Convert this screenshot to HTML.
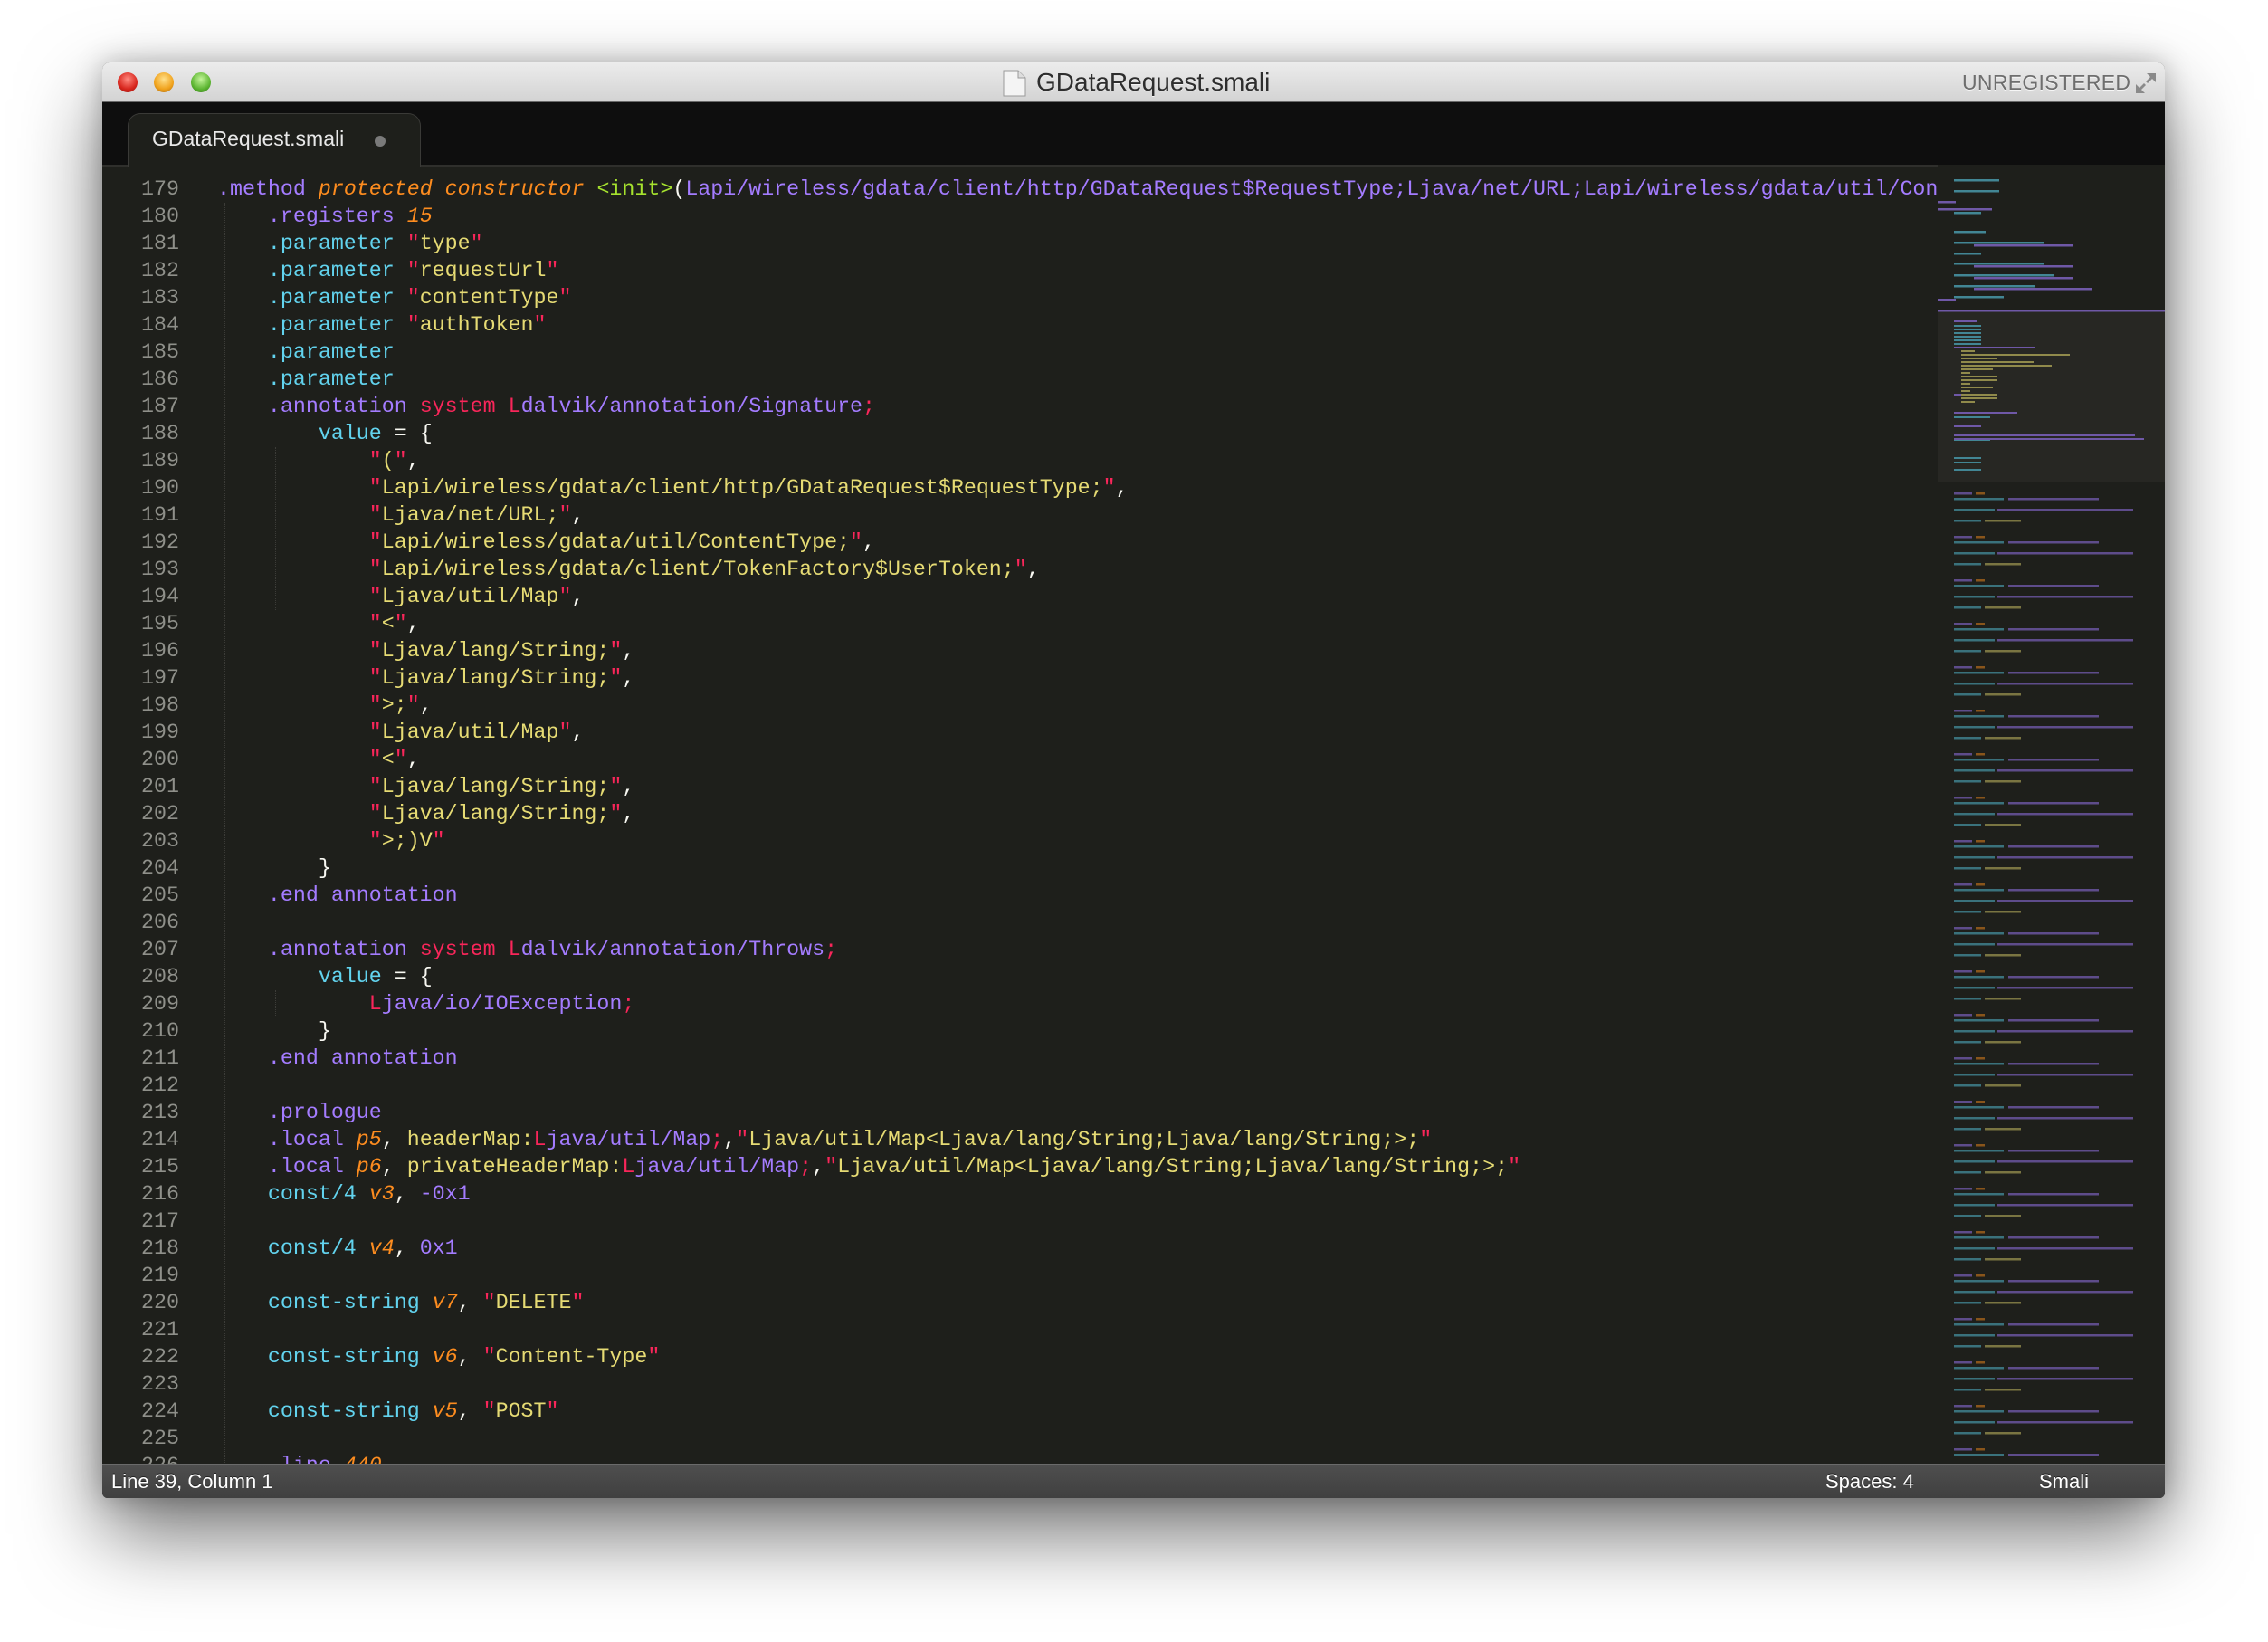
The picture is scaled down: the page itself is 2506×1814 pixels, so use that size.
<!DOCTYPE html>
<html><head><meta charset="utf-8">
<style>
html,body{margin:0;padding:0;}
body{width:2506px;height:1814px;background:#fff;position:relative;overflow:hidden;font-family:"Liberation Sans",sans-serif;}
.win{position:absolute;left:113px;top:69px;width:2279px;height:1586px;border-radius:8px 8px 6px 6px;box-shadow:0 40px 90px rgba(0,0,0,0.55),0 0 30px rgba(0,0,0,0.25);overflow:hidden;background:#1e1f1b;}
.title{position:absolute;left:0;top:0;width:100%;height:43px;background:linear-gradient(#ececec,#d3d3d3);border-bottom:1px solid #6a6a6a;}
.tl{position:absolute;top:11px;width:22px;height:22px;border-radius:50%;}
.ttext{position:absolute;left:1032px;top:6px;font-size:28px;color:#2e2e2e;text-shadow:0 1px 0 #f4f4f4;}
.unreg{position:absolute;left:2055px;top:9px;font-size:23px;color:#6e6e6e;text-shadow:0 1px 0 #f6f6f6;letter-spacing:0.3px;}
.tabbar{position:absolute;left:0;top:44px;width:100%;height:69px;background:#0e0e0e;border-bottom:2px solid #2f2f2c;}
.tab{position:absolute;left:28px;top:12px;width:322px;height:59px;background:#1e1f1b;border-radius:14px 14px 0 0;border:1px solid #3a3a37;border-bottom:none;}
.tab span{position:absolute;left:26px;top:14px;font-size:23px;color:#e8e8e8;}
.tab i{position:absolute;left:272px;top:24px;width:12px;height:12px;border-radius:50%;background:#7a7a7a;}
.code{position:absolute;left:0;top:115px;width:2028px;height:1433px;overflow:hidden;font-family:"Liberation Mono",monospace;font-size:23.3px;}
.ln{position:absolute;left:0;top:10px;width:85px;text-align:right;color:#8f908a;line-height:30px;white-space:pre;}
.src{position:absolute;left:127px;top:10px;line-height:30px;white-space:pre;color:#f8f8f2;}
.p{color:#a47cff}.c{color:#62d3ee}.o{color:#fd8c1f;font-style:italic}.g{color:#a6e22e}.y{color:#e6db74}.k{color:#f9265a}.w{color:#f8f8f2}
.guide{position:absolute;top:30px;width:0;border-left:1px dotted #3c3c38;}
.mini{position:absolute;left:2028px;top:113px;width:251px;height:1435px;background:#1e1f1b;overflow:hidden;}
.status{position:absolute;left:0;top:1548px;width:100%;height:38px;background:linear-gradient(#4e4e4e,#3f3f3f);border-top:2px solid #6a6a6a;color:#fff;font-size:22px;}
.status span{position:absolute;top:5px;text-shadow:0 -1px 0 #222;}
</style></head><body>
<div class="win">
 <div class="title">
  <div class="tl" style="left:17px;background:radial-gradient(circle at 50% 35%,#ff8a80,#d8261d 60%,#8e1410);"></div>
  <div class="tl" style="left:57px;background:radial-gradient(circle at 50% 35%,#ffe08a,#f0a21c 60%,#a06212);"></div>
  <div class="tl" style="left:98px;background:radial-gradient(circle at 50% 35%,#c4f59a,#5cb531 60%,#2f7218);"></div>
  <svg style="position:absolute;left:995px;top:8px" width="26" height="30" viewBox="0 0 26 30"><path d="M1 1H17L25 9V29H1Z" fill="#f4f4f4" stroke="#9a9a9a"/><path d="M17 1V9H25" fill="#ddd" stroke="#9a9a9a"/></svg>
  <div class="ttext">GDataRequest.smali</div>
  <div class="unreg">UNREGISTERED</div>
  <svg style="position:absolute;left:2245px;top:10px" width="26" height="26" viewBox="0 0 26 26"><path d="M14 2H24V12L20 8L15 13L13 11L18 6Z" fill="#8a8a8a"/><path d="M12 24H2V14L6 18L11 13L13 15L8 20Z" fill="#8a8a8a"/></svg>
 </div>
 <div class="tabbar"><div class="tab"><span>GDataRequest.smali</span><i></i></div></div>
 <div class="code">
  <div class="guide" style="left:135px;top:40px;height:1400px"></div>
  <div class="guide" style="left:191px;top:310px;height:180px"></div>
  <div class="guide" style="left:191px;top:910px;height:30px"></div>
<div class="ln">179
180
181
182
183
184
185
186
187
188
189
190
191
192
193
194
195
196
197
198
199
200
201
202
203
204
205
206
207
208
209
210
211
212
213
214
215
216
217
218
219
220
221
222
223
224
225
226</div>
<div class="src"><span class="p">.method</span> <span class="o">protected constructor</span> <span class="g">&lt;init&gt;</span>(<span class="p">Lapi/wireless/gdata/client/http/GDataRequest$RequestType;Ljava/net/URL;Lapi/wireless/gdata/util/ContentType;</span>
    <span class="p">.registers</span> <span class="o">15</span>
    <span class="c">.parameter</span> <span class="k">"</span><span class="y">type</span><span class="k">"</span>
    <span class="c">.parameter</span> <span class="k">"</span><span class="y">requestUrl</span><span class="k">"</span>
    <span class="c">.parameter</span> <span class="k">"</span><span class="y">contentType</span><span class="k">"</span>
    <span class="c">.parameter</span> <span class="k">"</span><span class="y">authToken</span><span class="k">"</span>
    <span class="c">.parameter</span>
    <span class="c">.parameter</span>
    <span class="p">.annotation</span> <span class="k">system</span> <span class="k">L</span><span class="p">dalvik/annotation/Signature</span><span class="k">;</span>
        <span class="c">value</span> = {
            <span class="k">"</span><span class="y">(</span><span class="k">"</span>,
            <span class="k">"</span><span class="y">Lapi/wireless/gdata/client/http/GDataRequest$RequestType;</span><span class="k">"</span>,
            <span class="k">"</span><span class="y">Ljava/net/URL;</span><span class="k">"</span>,
            <span class="k">"</span><span class="y">Lapi/wireless/gdata/util/ContentType;</span><span class="k">"</span>,
            <span class="k">"</span><span class="y">Lapi/wireless/gdata/client/TokenFactory$UserToken;</span><span class="k">"</span>,
            <span class="k">"</span><span class="y">Ljava/util/Map</span><span class="k">"</span>,
            <span class="k">"</span><span class="y">&lt;</span><span class="k">"</span>,
            <span class="k">"</span><span class="y">Ljava/lang/String;</span><span class="k">"</span>,
            <span class="k">"</span><span class="y">Ljava/lang/String;</span><span class="k">"</span>,
            <span class="k">"</span><span class="y">&gt;;</span><span class="k">"</span>,
            <span class="k">"</span><span class="y">Ljava/util/Map</span><span class="k">"</span>,
            <span class="k">"</span><span class="y">&lt;</span><span class="k">"</span>,
            <span class="k">"</span><span class="y">Ljava/lang/String;</span><span class="k">"</span>,
            <span class="k">"</span><span class="y">Ljava/lang/String;</span><span class="k">"</span>,
            <span class="k">"</span><span class="y">&gt;;)V</span><span class="k">"</span>
        }
    <span class="p">.end annotation</span>

    <span class="p">.annotation</span> <span class="k">system</span> <span class="k">L</span><span class="p">dalvik/annotation/Throws</span><span class="k">;</span>
        <span class="c">value</span> = {
            <span class="k">L</span><span class="p">java/io/IOException</span><span class="k">;</span>
        }
    <span class="p">.end annotation</span>

    <span class="p">.prologue</span>
    <span class="p">.local</span> <span class="o">p5</span>, <span class="y">headerMap:</span><span class="k">L</span><span class="p">java/util/Map</span><span class="k">;</span>,<span class="k">"</span><span class="y">Ljava/util/Map&lt;Ljava/lang/String;Ljava/lang/String;&gt;;</span><span class="k">"</span>
    <span class="p">.local</span> <span class="o">p6</span>, <span class="y">privateHeaderMap:</span><span class="k">L</span><span class="p">java/util/Map</span><span class="k">;</span>,<span class="k">"</span><span class="y">Ljava/util/Map&lt;Ljava/lang/String;Ljava/lang/String;&gt;;</span><span class="k">"</span>
    <span class="c">const/4</span> <span class="o">v3</span>, <span class="p">-0x1</span>

    <span class="c">const/4</span> <span class="o">v4</span>, <span class="p">0x1</span>

    <span class="c">const-string</span> <span class="o">v7</span>, <span class="k">"</span><span class="y">DELETE</span><span class="k">"</span>

    <span class="c">const-string</span> <span class="o">v6</span>, <span class="k">"</span><span class="y">Content-Type</span><span class="k">"</span>

    <span class="c">const-string</span> <span class="o">v5</span>, <span class="k">"</span><span class="y">POST</span><span class="k">"</span>

    <span class="p">.line</span> <span class="o">440</span></div>
 </div>
 <div class="mini">
  <svg width="251" height="1435" viewBox="0 0 251 1435" style="position:absolute;left:0;top:0;opacity:0.75">
   <rect x="0" y="160" width="251" height="190" fill="#2a2a26"/>
   <g transform="translate(0,-72)">
   <g fill="#4ea9bd">
    <rect x="18" y="88" width="50" height="2.5"/><rect x="18" y="100" width="50" height="2.5"/><rect x="18" y="124" width="30" height="2.5"/><rect x="18" y="145" width="35" height="2.5"/><rect x="18" y="157" width="100" height="2.5"/><rect x="18" y="169" width="30" height="2.5"/><rect x="18" y="180" width="100" height="2.5"/><rect x="18" y="193" width="110" height="2.5"/><rect x="18" y="205" width="90" height="2.5"/><rect x="18" y="217" width="55" height="2.5"/>
    <rect x="18" y="249" width="30" height="2"/><rect x="18" y="253" width="30" height="2"/><rect x="18" y="257" width="30" height="2"/><rect x="18" y="261" width="30" height="2"/><rect x="18" y="265" width="30" height="2"/><rect x="18" y="269" width="30" height="2"/>
    <rect x="18" y="350" width="40" height="2"/><rect x="18" y="375" width="40" height="2"/><rect x="18" y="395" width="30" height="2"/><rect x="18" y="400" width="30" height="2"/><rect x="18" y="408" width="30" height="2"/>
   </g>
   <g fill="#8a6bd6">
    <rect x="0" y="112" width="20" height="2.5"/><rect x="0" y="120" width="60" height="2.5"/><rect x="40" y="160" width="110" height="2.5"/><rect x="40" y="183" width="110" height="2.5"/><rect x="40" y="196" width="110" height="2.5"/><rect x="40" y="208" width="130" height="2.5"/><rect x="0" y="220" width="20" height="2.5"/>
    <rect x="0" y="232" width="251" height="2.5"/><rect x="18" y="244" width="25" height="2"/><rect x="18" y="273" width="90" height="2"/><rect x="18" y="325" width="30" height="2"/><rect x="18" y="345" width="70" height="2"/><rect x="18" y="360" width="30" height="2"/><rect x="18" y="370" width="200" height="2"/><rect x="18" y="374" width="210" height="2"/>
   </g>
   <g fill="#b7ae5c">
    <rect x="26" y="277" width="15" height="2"/><rect x="26" y="281" width="120" height="2"/><rect x="26" y="285" width="40" height="2"/><rect x="26" y="289" width="80" height="2"/><rect x="26" y="293" width="100" height="2"/><rect x="26" y="297" width="35" height="2"/><rect x="26" y="301" width="10" height="2"/><rect x="26" y="305" width="40" height="2"/><rect x="26" y="309" width="40" height="2"/><rect x="26" y="313" width="10" height="2"/><rect x="26" y="317" width="35" height="2"/><rect x="26" y="321" width="10" height="2"/><rect x="26" y="325" width="40" height="2"/><rect x="26" y="329" width="40" height="2"/><rect x="26" y="333" width="15" height="2"/>
   </g>
   </g>
  </svg>
  <svg width="251" height="1100" viewBox="0 0 251 1100" style="position:absolute;left:0;top:360px;opacity:0.6">
   <defs><pattern id="mm" width="251" height="48" patternUnits="userSpaceOnUse">
    <rect x="18" y="2" width="20" height="2.5" fill="#8a6bd6"/><rect x="42" y="2" width="10" height="2.5" fill="#d07a1c"/>
    <rect x="18" y="8" width="55" height="2.5" fill="#4ea9bd"/><rect x="78" y="8" width="100" height="2.5" fill="#8a6bd6"/>
    <rect x="18" y="20" width="45" height="2.5" fill="#4ea9bd"/><rect x="66" y="20" width="150" height="2.5" fill="#8a6bd6"/>
    <rect x="18" y="32" width="30" height="2.5" fill="#4ea9bd"/><rect x="52" y="32" width="40" height="2.5" fill="#b7ae5c"/>
   </pattern></defs>
   <rect width="251" height="1100" fill="url(#mm)"/>
  </svg>
 </div>
 <div class="status"><span style="left:10px">Line 39, Column 1</span><span style="left:1904px">Spaces: 4</span><span style="left:2140px">Smali</span></div>
</div>
</body></html>
